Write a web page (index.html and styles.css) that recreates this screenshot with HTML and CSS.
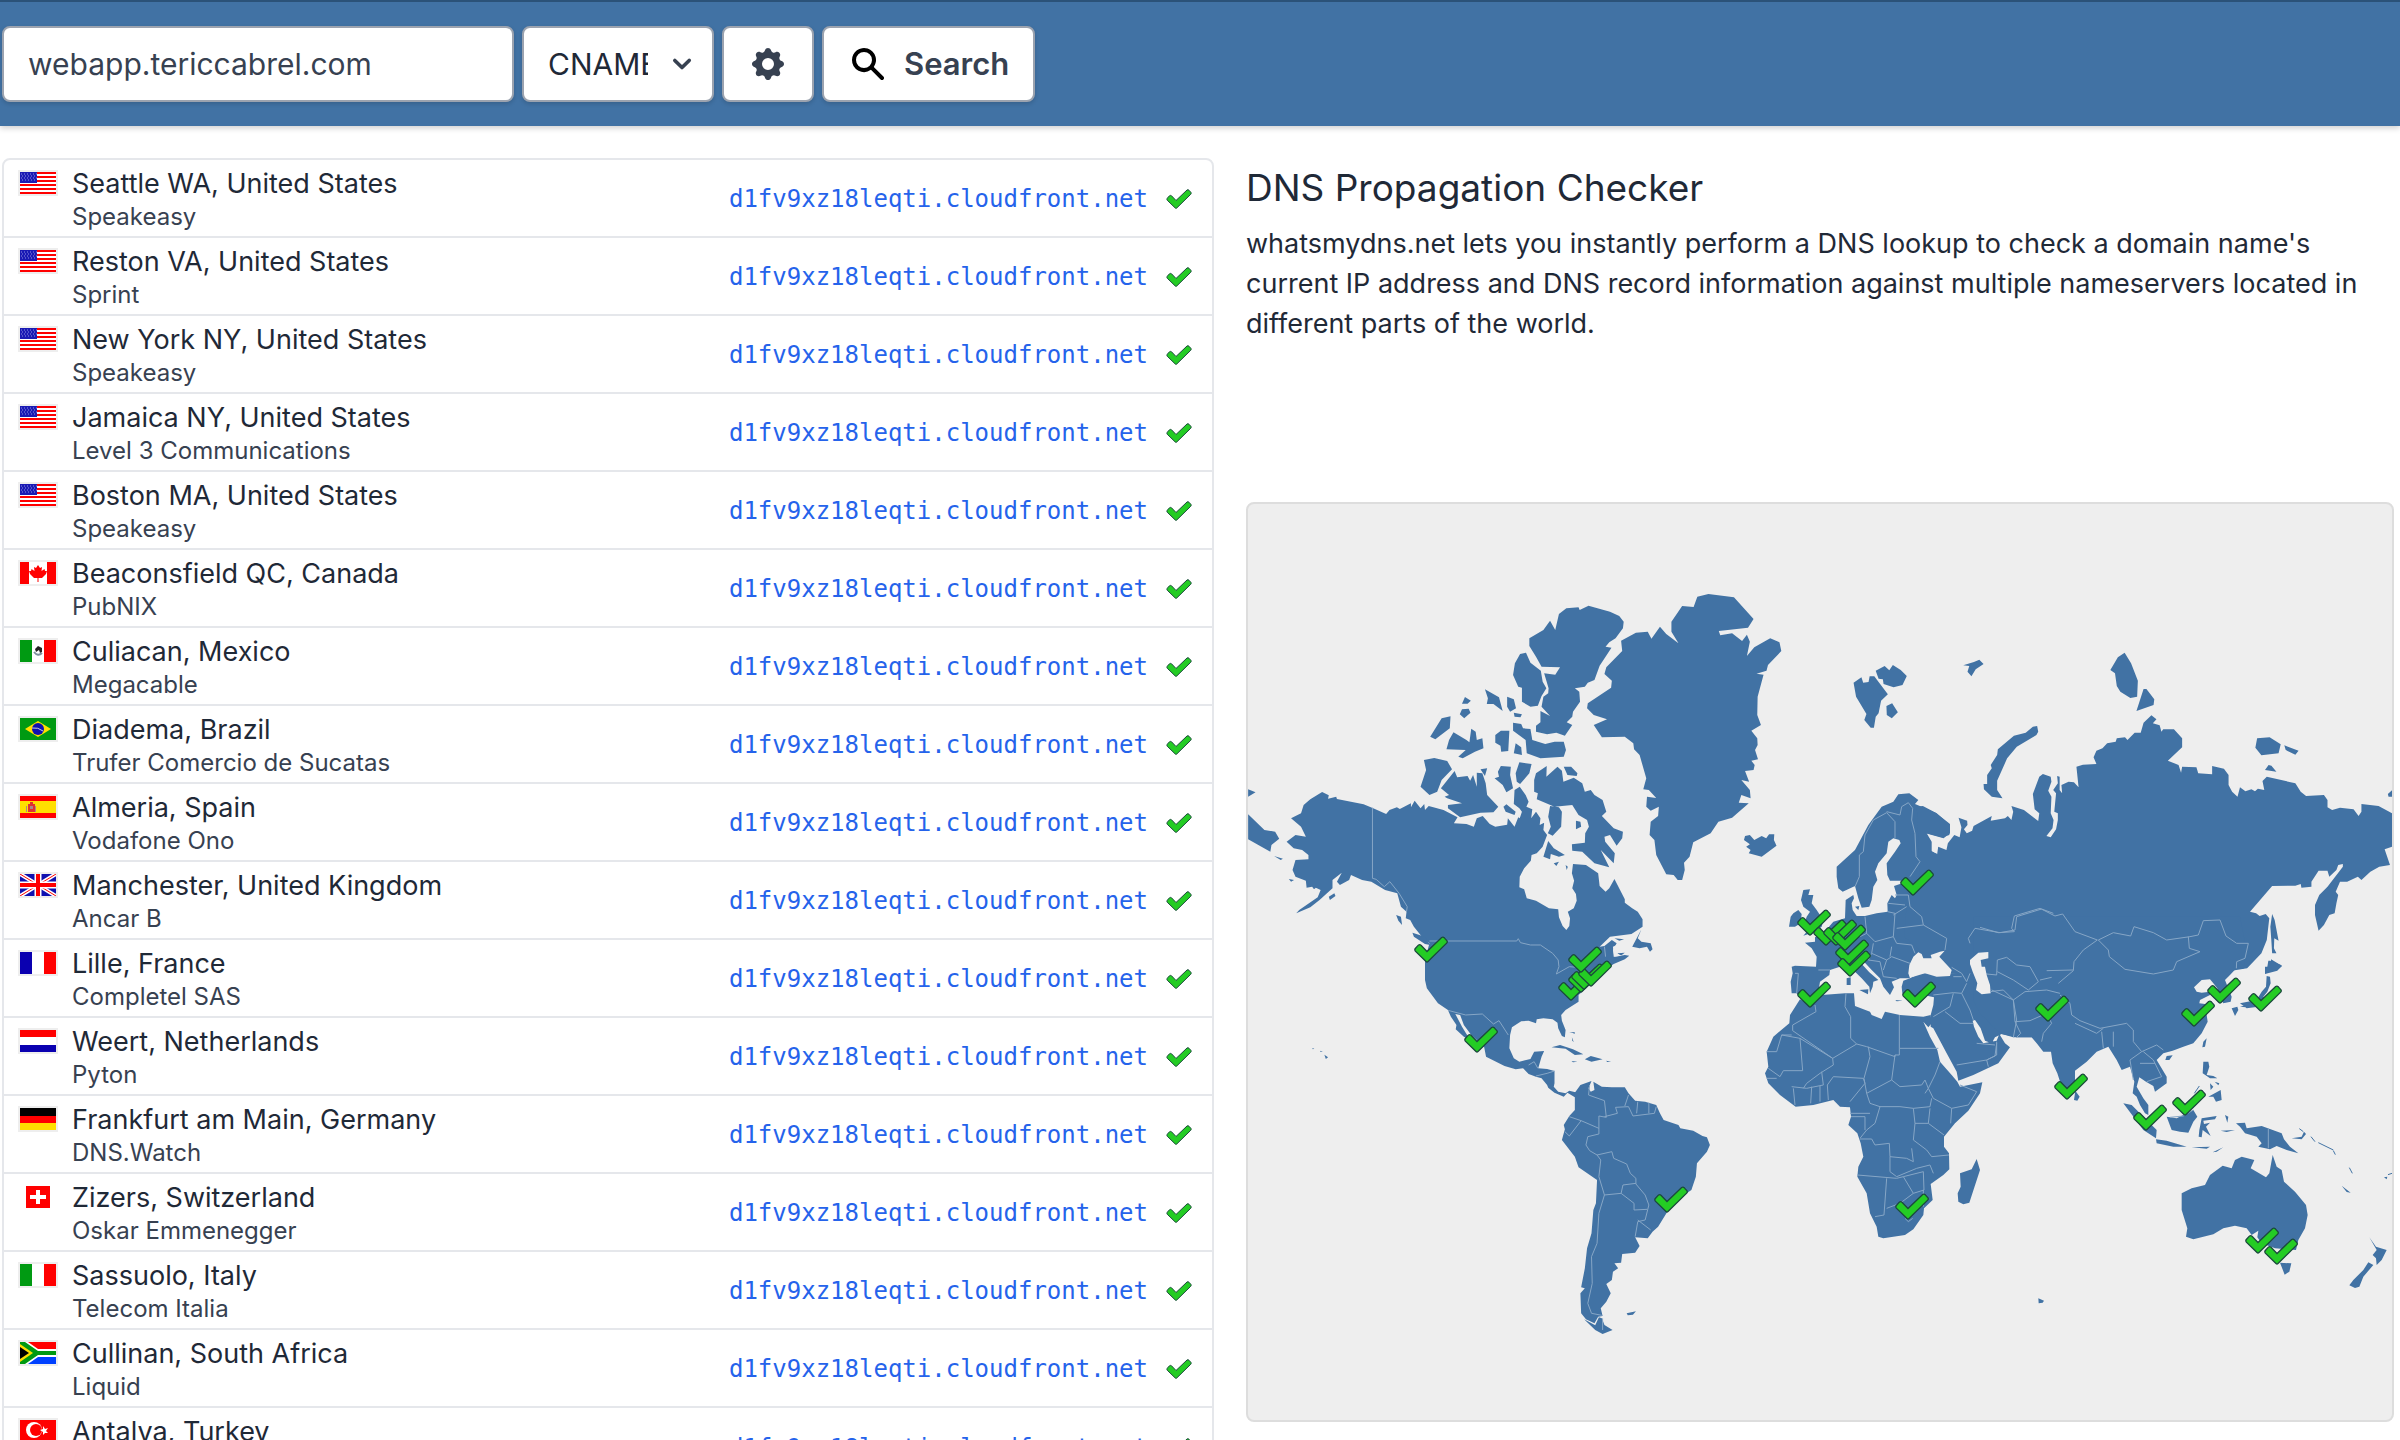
FILE: index.html
```html
<!DOCTYPE html>
<html lang="en">
<head>
<meta charset="utf-8">
<title>DNS Propagation Checker</title>
<link rel="stylesheet" href="styles.css">
</head>
<body>
<svg class="defs" aria-hidden="true">
  <symbol id="tick" viewBox="0 0 102 80"><path d="M4 45Q1 41 4 37L13 27Q17 24 21 27L39 46L83 4Q87 1 91 5L99 14Q101 17 98 21L42 76Q39 79 36 76Z" fill="#24cc24" stroke="#1b4a3c" stroke-width="4"/></symbol>
  <symbol id="us" viewBox="0 0 36 22"><path fill="#fff" d="M0 0h36v22H0z"/><path stroke="red" stroke-width="2" d="M0 1h36M0 5h36M0 9h36M0 13h36M0 17h36M0 21h36"/><path fill="#1a1ab4" d="M0 0h17v11H0z"/><path stroke="#8f8fe0" stroke-dasharray="1 2" d="M1 2h16M2 4h15M1 6h16M2 8h15"/></symbol>
  <symbol id="ca" viewBox="0 0 36 22"><path fill="#fff" d="M0 0h36v22H0z"/><path fill="red" d="M0 0h9v22H0zM27 0h9v22h-9zM18 3l2 3 2-1-.500 4 3-2 .500 2 2 0-1 3-4 4h-3.500v4h-1v-4H14l-4-4-1-3h2l.500-2 3 2-.500-4 2 1z"/></symbol>
  <symbol id="mx" viewBox="0 0 36 22"><path fill="#fff" d="M0 0h36v22H0z"/><path fill="#009a12" d="M0 0h12v22H0z"/><path fill="red" d="M24 0h12v22H24z"/><path d="M15 9l3-3 4 2 0 4-2 1-1-3-3 2z" fill="#222"/><path d="M14 12q4 5 8 1" fill="none" stroke="#7b8f9c" stroke-width="2"/></symbol>
  <symbol id="br" viewBox="0 0 36 22"><path fill="#009a12" d="M0 0h36v22H0z"/><path fill="#ffe000" d="M18 3l13 8-13 8-13-8z"/><circle cx="18" cy="11" r="6" fill="#1010b0"/><path d="M12 10q6-1 11 3" stroke="#ccd" fill="none"/></symbol>
  <symbol id="es" viewBox="0 0 36 22"><path fill="red" d="M0 0h36v22H0z"/><path fill="#ffdf00" d="M0 5h36v12H0z"/><path fill="#e03030" d="M8 8h2v-2h3v2h2v8H8z"/><path fill="#a88" d="M6 10h1v6H6zM15 10h1v6h-1zM10 10h3v3h-3z"/></symbol>
  <symbol id="gb" viewBox="0 0 36 22"><path fill="#1010b0" d="M0 0h36v22H0z"/><path stroke="#fff" stroke-width="4" d="M0 0l36 22M36 0L0 22"/><path stroke="red" stroke-width="1" d="M0 0l36 22M36 0L0 22"/><path stroke="#fff" stroke-width="7" d="M18 0v22M0 11h36"/><path stroke="red" stroke-width="4" d="M18 0v22M0 11h36"/></symbol>
  <symbol id="fr" viewBox="0 0 36 22"><path fill="#fff" d="M0 0h36v22H0z"/><path fill="#0a00b0" d="M0 0h12v22H0z"/><path fill="red" d="M24 0h12v22H24z"/></symbol>
  <symbol id="nl" viewBox="0 0 36 22"><path fill="#fff" d="M0 0h36v22H0z"/><path fill="red" d="M0 0h36v7H0z"/><path fill="#0a00b0" d="M0 15h36v7H0z"/></symbol>
  <symbol id="de" viewBox="0 0 36 22"><path d="M0 0h36v8H0z"/><path fill="red" d="M0 8h36v7H0z"/><path fill="#ffdf00" d="M0 15h36v7H0z"/></symbol>
  <symbol id="ch" viewBox="0 0 36 22"><path fill="red" d="M6 0h24v22H6z"/><path stroke="#fff" stroke-width="4" d="M18 4v14M10 11h16"/></symbol>
  <symbol id="it" viewBox="0 0 36 22"><path fill="#fff" d="M0 0h36v22H0z"/><path fill="#009a12" d="M0 0h12v22H0z"/><path fill="red" d="M24 0h12v22H24z"/></symbol>
  <symbol id="za" viewBox="0 0 36 22"><path fill="#fff" d="M0 0h36v22H0z"/><path fill="red" d="M8 0h28v7H18z"/><path fill="#0040ff" d="M8 22h28v-7H18z"/><path fill="#009a12" d="M0 0h5l13 9h18v4H18L5 22H0z"/><path fill="#ffdf00" d="M0 2l13 9-13 9z"/><path d="M0 5l9 6-9 6z"/></symbol>
  <symbol id="tr" viewBox="0 0 36 22"><path fill="red" d="M0 0h36v22H0z"/><circle cx="14" cy="10" r="8" fill="#fff"/><circle cx="16" cy="10" r="6" fill="red"/><path fill="#fff" d="M20 10l3-1 0-3 2 3 3-1-2 3 2 2-3 0-2 2 0-3z"/></symbol>
</svg>

<header class="topbar">
  <form class="search" onsubmit="return false">
    <input class="control domain" type="text" value="webapp.tericcabrel.com" aria-label="Domain name">
    <div class="record">
      <select class="control type" aria-label="Record type"><option>CNAME</option></select>
      <svg class="chevron" viewBox="0 0 20 20" aria-hidden="true"><path fill="#374151" d="M5.293 7.293a1 1 0 011.414 0L10 10.586l3.293-3.293a1 1 0 111.414 1.414l-4 4a1 1 0 01-1.414 0l-4-4a1 1 0 010-1.414z"/></svg>
    </div>
    <button class="control button" type="button" aria-label="Settings"><svg class="icon" viewBox="0 0 20 20"><path fill="#374151" fill-rule="evenodd" d="M11.490 3.170c-.38-1.560-2.600-1.560-2.980 0a1.532 1.532 0 01-2.286.948c-1.372-.836-2.942.734-2.106 2.106.54.886.061 2.042-.947 2.287-1.561.379-1.561 2.600 0 2.978a1.532 1.532 0 01.947 2.287c-.836 1.372.734 2.942 2.106 2.106a1.532 1.532 0 012.287.947c.379 1.561 2.600 1.561 2.978 0a1.533 1.533 0 012.287-.947c1.372.836 2.942-.734 2.106-2.106a1.533 1.533 0 01.947-2.287c1.561-.379 1.561-2.600 0-2.978a1.532 1.532 0 01-.947-2.287c.836-1.372-.734-2.942-2.106-2.106a1.532 1.532 0 01-2.287-.947zM10 13a3 3 0 100-6 3 3 0 000 6z"/></svg></button>
    <button class="control button" type="submit"><svg class="icon" viewBox="0 0 20 20" aria-hidden="true"><path fill-rule="evenodd" d="M8 4a4 4 0 100 8 4 4 0 000-8zM2 8a6 6 0 1110.890 3.476l4.817 4.817a1 1 0 01-1.414 1.414l-4.816-4.816A6 6 0 012 8z"/></svg>Search</button>
  </form>
</header>

<main class="content">
  <section class="results" aria-label="Results">
    <table class="servers">
      <tbody>
        <tr><td class="flag"><svg><use href="#us"/></svg></td><td class="place"><div class="city">Seattle WA, United States</div><div class="provider">Speakeasy</div></td><td class="answer"><a href="#">d1fv9xz18leqti.cloudfront.net</a></td><td class="status"><svg><use href="#tick"/></svg></td></tr>
        <tr><td class="flag"><svg><use href="#us"/></svg></td><td class="place"><div class="city">Reston VA, United States</div><div class="provider">Sprint</div></td><td class="answer"><a href="#">d1fv9xz18leqti.cloudfront.net</a></td><td class="status"><svg><use href="#tick"/></svg></td></tr>
        <tr><td class="flag"><svg><use href="#us"/></svg></td><td class="place"><div class="city">New York NY, United States</div><div class="provider">Speakeasy</div></td><td class="answer"><a href="#">d1fv9xz18leqti.cloudfront.net</a></td><td class="status"><svg><use href="#tick"/></svg></td></tr>
        <tr><td class="flag"><svg><use href="#us"/></svg></td><td class="place"><div class="city">Jamaica NY, United States</div><div class="provider">Level 3 Communications</div></td><td class="answer"><a href="#">d1fv9xz18leqti.cloudfront.net</a></td><td class="status"><svg><use href="#tick"/></svg></td></tr>
        <tr><td class="flag"><svg><use href="#us"/></svg></td><td class="place"><div class="city">Boston MA, United States</div><div class="provider">Speakeasy</div></td><td class="answer"><a href="#">d1fv9xz18leqti.cloudfront.net</a></td><td class="status"><svg><use href="#tick"/></svg></td></tr>
        <tr><td class="flag"><svg><use href="#ca"/></svg></td><td class="place"><div class="city">Beaconsfield QC, Canada</div><div class="provider">PubNIX</div></td><td class="answer"><a href="#">d1fv9xz18leqti.cloudfront.net</a></td><td class="status"><svg><use href="#tick"/></svg></td></tr>
        <tr><td class="flag"><svg><use href="#mx"/></svg></td><td class="place"><div class="city">Culiacan, Mexico</div><div class="provider">Megacable</div></td><td class="answer"><a href="#">d1fv9xz18leqti.cloudfront.net</a></td><td class="status"><svg><use href="#tick"/></svg></td></tr>
        <tr><td class="flag"><svg><use href="#br"/></svg></td><td class="place"><div class="city">Diadema, Brazil</div><div class="provider">Trufer Comercio de Sucatas</div></td><td class="answer"><a href="#">d1fv9xz18leqti.cloudfront.net</a></td><td class="status"><svg><use href="#tick"/></svg></td></tr>
        <tr><td class="flag"><svg><use href="#es"/></svg></td><td class="place"><div class="city">Almeria, Spain</div><div class="provider">Vodafone Ono</div></td><td class="answer"><a href="#">d1fv9xz18leqti.cloudfront.net</a></td><td class="status"><svg><use href="#tick"/></svg></td></tr>
        <tr><td class="flag"><svg><use href="#gb"/></svg></td><td class="place"><div class="city">Manchester, United Kingdom</div><div class="provider">Ancar B</div></td><td class="answer"><a href="#">d1fv9xz18leqti.cloudfront.net</a></td><td class="status"><svg><use href="#tick"/></svg></td></tr>
        <tr><td class="flag"><svg><use href="#fr"/></svg></td><td class="place"><div class="city">Lille, France</div><div class="provider">Completel SAS</div></td><td class="answer"><a href="#">d1fv9xz18leqti.cloudfront.net</a></td><td class="status"><svg><use href="#tick"/></svg></td></tr>
        <tr><td class="flag"><svg><use href="#nl"/></svg></td><td class="place"><div class="city">Weert, Netherlands</div><div class="provider">Pyton</div></td><td class="answer"><a href="#">d1fv9xz18leqti.cloudfront.net</a></td><td class="status"><svg><use href="#tick"/></svg></td></tr>
        <tr><td class="flag"><svg><use href="#de"/></svg></td><td class="place"><div class="city">Frankfurt am Main, Germany</div><div class="provider">DNS.Watch</div></td><td class="answer"><a href="#">d1fv9xz18leqti.cloudfront.net</a></td><td class="status"><svg><use href="#tick"/></svg></td></tr>
        <tr><td class="flag plain"><svg><use href="#ch"/></svg></td><td class="place"><div class="city">Zizers, Switzerland</div><div class="provider">Oskar Emmenegger</div></td><td class="answer"><a href="#">d1fv9xz18leqti.cloudfront.net</a></td><td class="status"><svg><use href="#tick"/></svg></td></tr>
        <tr><td class="flag"><svg><use href="#it"/></svg></td><td class="place"><div class="city">Sassuolo, Italy</div><div class="provider">Telecom Italia</div></td><td class="answer"><a href="#">d1fv9xz18leqti.cloudfront.net</a></td><td class="status"><svg><use href="#tick"/></svg></td></tr>
        <tr><td class="flag"><svg><use href="#za"/></svg></td><td class="place"><div class="city">Cullinan, South Africa</div><div class="provider">Liquid</div></td><td class="answer"><a href="#">d1fv9xz18leqti.cloudfront.net</a></td><td class="status"><svg><use href="#tick"/></svg></td></tr>
        <tr><td class="flag"><svg><use href="#tr"/></svg></td><td class="place"><div class="city">Antalya, Turkey</div></td><td class="answer"><a href="#">d1fv9xz18leqti.cloudfront.net</a></td><td class="status"><svg><use href="#tick"/></svg></td></tr>
      </tbody>
    </table>
  </section>

  <section class="about">
    <div class="intro">
      <h1>DNS Propagation Checker</h1>
      <p>whatsmydns.net lets you instantly perform a DNS lookup to check a domain name's current IP address and DNS record information against multiple nameservers located in different parts of the world.</p>
    </div>
    <div class="map">
      <svg class="world" viewBox="1248 504 1144 916" role="img" aria-label="World map of DNS servers">
        <!-- North America -->
        <g transform="translate(1240 560) scale(.37 .33333)">
          <path class="land" d="M222 696L240 706 238 716 260 710 262 717 334 733 360 745 395 762 404 750 424 742 432 747 462 730 462 742 472 722 488 745 498 732 500 750 510 738 550 750 588 772 578 790 612 792 632 800 640 775 656 768 675 792 690 800 722 794 724 775 742 800 752 772 756 775 762 755 755 745 740 732 742 690 756 680 772 705 780 725 774 740 790 748 787 775 800 755 812 775 810 795 822 788 820 810 830 825 818 860 802 880 788 885 786 902 768 925 756 950 755 982 768 988 775 1015 800 1022 835 1045 860 1048 862 1072 872 1098 882 1110 890 1098 892 1075 886 1055 902 1045 910 1022 908 1002 898 985 903 962 897 940 900 912 935 915 968 940 972 978 988 995 998 985 1012 957 1040 1018 1040 1028 1060 1045 1075 1055 1088 1078 1088 1100 1058 1122 1000 1130 972 1160 985 1158 1005 1140 1018 1150 1008 1170 1012 1190 1040 1185 1052 1187 1040 1198 1010 1212 985 1230 950 1270 930 1290 915 1305 915 1325 880 1350 868 1365 870 1382 880 1410 878 1432 870 1428 860 1405 858 1388 845 1378 820 1375 802 1378 800 1390 780 1382 760 1384 735 1402 730 1425 728 1465 740 1495 755 1505 785 1497 795 1475 822 1473 815 1490 806 1525 830 1527 850 1533 850 1570 848 1580 860 1595 880 1600 890 1592 912 1598 905 1612 885 1598 875 1610 850 1598 833 1583 830 1575 815 1555 800 1550 780 1542 765 1525 745 1528 715 1518 665 1490 660 1462 640 1440 625 1425 605 1395 595 1365 582 1362 600 1400 622 1440 605 1430 583 1408 585 1395 570 1370 562 1350 535 1330 505 1285 500 1260 500 1200 512 1150 490 1128 470 1100 460 1080 448 1075 450 1055 435 1040 425 1000 392 990 355 965 330 960 300 945 295 960 270 975 262 965 275 938 250 960 250 985 215 1020 190 1042 152 1060 160 1050 210 1012 218 990 205 983 200 988 195 980 180 983 178 962 150 950 142 930 150 900 185 898 185 885 168 870 145 865 126 845 150 825 178 830 165 800 138 775 165 760 172 735 190 718Z"/>
          <!-- Greenland and Iceland -->
          <path class="land" d="M1236 110L1266 102 1335 112 1388 177 1373 203 1294 213 1298 226 1330 220 1357 243 1370 224 1378 245 1370 288 1390 262 1433 235 1458 247 1463 273 1427 315 1423 332 1396 341 1415 344 1399 410 1398 465 1408 495 1382 512 1398 535 1399 555 1392 570 1400 598 1382 602 1391 615 1388 630 1365 633 1376 665 1355 660 1378 690 1380 715 1355 705 1348 728 1375 730 1330 773 1293 785 1272 820 1225 847 1215 890 1200 908 1202 930 1195 960 1183 960 1172 945 1152 943 1125 885 1120 840 1107 825 1110 785 1130 768 1132 740 1110 752 1098 740 1100 710 1125 714 1105 690 1090 688 1098 655 1080 585 1065 568 1063 550 1040 530 978 532 956 495 992 478 956 465 938 445 940 430 1003 383 1005 362 985 342 990 322 1033 273 1030 242 1070 218 1102 215 1112 236 1135 200 1152 222 1185 250 1166 215 1166 185 1195 138 1226 141ZM1365 828L1378 825 1390 840 1410 828 1422 835 1430 823 1444 823 1443 840 1450 857 1410 890 1375 880 1380 870 1368 860 1378 853 1362 840Z"/>
          <!-- Arctic islands -->
          <path class="land" d="M915 142L918 150 942 137 1000 155 1025 168 1037 185 1035 205 1015 235 998 247 988 260 1004 263 972 317 958 360 940 368 932 380 905 385 917 395 919 425 900 455 898 470 883 487 898 495 878 527 855 518 830 523 800 515 800 497 812 487 812 453 838 468 815 440 820 410 833 400 834 385 822 340 852 344 865 322 815 320 800 290 782 258 782 235 820 210 838 182 852 210 862 162 882 145ZM757 282L773 278 785 308 813 332 818 365 828 385 815 408 805 437 785 440 762 425 762 383 752 380 738 345 743 310ZM662 388L700 412 710 453 685 432 667 432 670 415ZM722 410L740 418 746 445 730 455 722 440ZM608 411L624 422 615 431 600 431ZM600 448L618 446 623 458 606 475 594 463ZM545 475L569 469 567 505 528 538 514 530ZM577 517L612 540 620 547 625 506 637 515 640 540 655 535 658 565 635 575 602 595 590 590 610 570 558 568 565 540ZM690 525L705 512 728 512 725 573 706 575 704 557 690 548ZM740 458L762 463 758 472 742 470ZM738 488L760 492 765 505 785 507 790 540 825 552 850 545 875 545 881 570 875 590 812 595 775 580 772 540 738 512ZM745 550L760 562 762 585 740 580ZM497 600L525 594 560 603 573 628 545 660 533 695 512 705 488 680 503 630ZM580 633L587 652 615 648 622 662 630 645 640 680 640 638 655 640 664 670 668 705 698 740 685 757 650 758 595 772 562 745 562 735 600 730 560 715 553 710 565 705 543 685ZM650 628L668 625 662 648ZM705 618L732 620 730 645 738 685 720 697 710 675 688 655 700 650 697 635ZM755 607L788 612 782 640 757 672 748 665 745 640ZM712 740L720 733 745 755 742 765 718 755ZM800 640L829 618 828 650 858 620 870 632 874 665 902 653 925 670 932 695 948 690 958 705 980 720 990 755 978 768 1010 805 1035 815 1033 835 1018 857 1000 825 985 830 987 845 1013 880 1010 910 975 870 998 922 958 910 925 875 898 872 897 853 932 848 933 820 943 800 938 780 915 765 898 735 850 740 802 718 805 700 795 695 795 660ZM875 620L895 620 912 640 910 648 885 645ZM838 738L862 742 870 755 868 800 845 827 832 820 840 800 833 770ZM908 782L920 785 922 800 908 808ZM833 843L848 865 878 885 862 890 840 882 838 898 820 890ZM848 910L862 905 855 918ZM880 915L886 920 883 930Z"/>
          <path class="land" d="M22 688L42 697 22 710ZM22 763L66 810 95 815 106 836 85 855 82 875 22 838ZM92 888L116 896 110 900ZM132 957L146 960 138 965ZM240 1010L255 1000 258 1008 243 1020ZM422 1065L435 1070 438 1095 428 1082ZM466 1118L500 1130 514 1155 500 1152 470 1130ZM1085 1108L1075 1135 1085 1145 1110 1150 1115 1168 1108 1175 1100 1160 1080 1165 1060 1160ZM1012 1135L1038 1138 1025 1142ZM1020 1180L1040 1178 1028 1188ZM195 1464L201 1466 197 1468ZM216 1472L224 1476 218 1476ZM228 1484L238 1492 232 1497ZM842 1462L865 1455 900 1468 928 1483 905 1485 880 1466ZM932 1498L948 1488 980 1498 950 1505ZM896 1503L912 1505 900 1507ZM990 1502L1003 1505 992 1506ZM890 1416L905 1417 904 1422 900 1419ZM897 1432L902 1446 898 1442Z"/>
          <path class="water" d="M1008 1160L1018 1155 1018 1180 1032 1187 1010 1190Z"/>
          <path class="border" d="M358 743V955L368 958 390 980 405 965 430 1000 452 1040 450 1055M512 1143H748L752 1136 758 1148 785 1155 812 1155 845 1180 860 1200 862 1220 855 1242 890 1220 912 1222M985 1160L988 1190M562 1351L610 1365 655 1362 685 1392 700 1382 725 1425M780 1515L795 1505 805 1525M800 1548L830 1540 850 1533"/>
        </g>
        <!-- South America -->
        <g transform="translate(1240 880) scale(.37 .33333)">
          <path class="land" d="M905 650L905 638 920 615 950 603 942 625 948 635 958 630 955 605 978 620 1005 622 1040 622 1050 640 1068 662 1095 665 1125 675 1135 700 1145 720 1185 735 1190 745 1225 752 1250 768 1262 772 1270 795 1262 815 1235 850 1232 890 1220 930 1200 945 1155 995 1130 1040 1115 1055 1102 1075 1068 1072 1080 1098 1068 1118 1033 1122 1030 1148 1012 1150 1022 1165 1008 1175 1005 1200 990 1212 1002 1240 990 1265 975 1285 980 1308 968 1310 958 1330 935 1318 922 1300 920 1240 932 1225 922 1222 932 1165 938 1105 950 1060 955 990 962 970 965 900 915 862 905 830 870 780 878 748 875 735 890 708 905 690ZM930 1318L960 1336 970 1312 978 1315 985 1335 1007 1350 980 1362 960 1350ZM1045 1300L1070 1294 1062 1304 1048 1306Z"/>
          <path class="border" d="M945 615L942 645 985 662 990 712 970 708 970 762 940 770 935 795 945 812 965 825 1005 815 1010 835 1045 852 1055 880 1070 895 1070 912 1095 945 1105 975 1095 1020 1075 1025 1068 1070M985 710L1020 700 1015 682 1050 680 1062 708 1120 700 1125 680M1050 645L1040 678M1075 665L1072 700M1105 668V700M890 710L922 722 970 745M922 722L890 768 878 755M965 825L975 840 970 890 985 945 1030 940 1035 915 1070 910M1030 940L1065 970 1065 990 1100 988M985 945L970 1000 965 1090 950 1130 952 1210 940 1270 950 1300 978 1306M980 1315V1350M1075 1020L1110 1050"/>
        </g>
        <!-- Europe, Africa and the Middle East -->
        <g transform="translate(1740 760) scale(.33333)">
          <path class="land" d="M180 718L200 728 245 705 315 700 342 700 345 738 390 755 395 765 425 777 435 755 480 765 550 770 572 765 575 790 565 802 550 785 570 830 592 870 600 905 635 945 652 965 660 980 727 967 720 1000 685 1052 645 1090 612 1130 612 1160 627 1180 628 1228 610 1245 572 1272 578 1320 552 1345 550 1365 520 1408 495 1425 430 1435 415 1430 410 1400 390 1360 380 1300 352 1250 355 1220 370 1190 362 1150 352 1120 325 1095 333 1070 330 1042 300 1040 280 1020 220 1035 167 1040 120 1005 85 970 75 940 85 920 80 875 100 830 148 790 150 765ZM710 1197L720 1230 688 1328 670 1333 655 1325 653 1300 662 1280 660 1240 695 1228Z"/>
          <path class="land" d="M155 620L165 617 228 620 230 590 215 565 195 548 225 545 225 532 250 520 280 485 315 475 317 420 340 405 342 415 335 430 338 450 350 468 375 468 410 460 443 455 442 430 455 405 465 415 470 405 462 378 480 372 540 345 960 300V600L760 640 505 640 510 655 480 655 455 665 462 682 450 705 430 680 420 655 395 630 372 605 368 615 388 637 415 660 400 665 398 680 390 700 388 680 365 655 345 635 330 625 300 620 270 630 268 645 240 665 235 695 205 715 180 712 170 700 155 700 152 665 158 640ZM290 320L345 270 385 195 425 140 460 125 475 103 508 100 535 120 525 132 545 140 590 160 630 195 628 225 605 232 560 220 575 245 575 275 592 282 600 340 540 360 480 362 450 362 442 345 440 310 465 275 482 250 478 240 460 235 445 245 440 280 415 310 405 335 412 360 400 380 395 420 388 440 365 443 355 415 345 378 308 395 295 385 290 350ZM190 390L210 388 205 405 220 405 215 430 230 450 250 480 245 500 225 515 190 527 205 510 190 500 200 470 210 455 190 440 183 420ZM160 460L175 450 185 462 182 490 165 500 147 500 152 470ZM345 440L358 438 355 450ZM320 655L332 652 332 675 320 675ZM358 690L385 688 384 703ZM466 720L488 722 470 724ZM322 630L330 632 328 648Z"/>
          <path class="land" d="M490 662L510 655 540 640 960 640V850L875 832 820 832 785 822 765 832 755 850 735 842 722 805 705 780 698 782 702 800 715 830 730 850 770 842 778 822 795 850 810 862 775 910 700 945 655 962 650 935 620 880 580 805 572 800 572 765 580 735 582 712 550 705 520 715 487 700 485 680Z"/>
        </g>
        <!-- Russia and its Arctic islands -->
        <g transform="translate(1840 620) scale(.35714 .33333)">
          <path class="land" d="M215 560L232 558 268 578 308 612 308 640 290 655 240 640 255 665 255 692 272 703 275 680 298 690 302 670 320 645 335 652 340 622 332 593 356 602 357 615 347 628 355 640 370 632 374 618 425 588 422 602 462 595 470 588 480 600 485 575 480 558 515 570 555 603 558 580 545 568 540 522 558 470 568 462 590 470 592 485 583 512 592 530 590 580 598 600 595 625 578 648 590 652 605 628 610 600 610 580 600 575 605 520 597 510 610 490 608 468 615 470 615 510 622 520 620 495 640 485 655 487 668 502 662 440 680 434 718 432 710 412 718 392 735 385 748 370 772 365 775 355 798 352 805 360 825 338 842 338 850 308 872 286 886 298 876 310 895 316 900 335 905 328 935 328 958 355 958 382 918 422 948 435 955 458 958 440 998 442 1003 460 1042 463 1042 438 1075 446 1088 465 1088 495 1098 515 1113 530 1120 502 1135 514 1152 508 1162 514 1170 506 1188 510 1183 483 1195 470 1275 490 1290 515 1305 528 1355 525 1365 540 1365 562 1378 570 1400 563 1438 568 1452 588 1460 575 1460 552 1508 558 1546 580V680L1525 688 1540 735 1510 740 1485 755 1460 780 1450 770 1420 785 1400 785 1388 815 1395 825 1390 850 1385 880 1370 885 1355 915 1340 932 1330 885 1330 855 1342 825 1365 800 1408 740V732L1395 735 1390 750 1370 770 1365 752 1340 752 1320 785V800L1292 803 1290 792 1275 797 1210 798 1148 875 1165 880 1175 888 1192 882 1202 895 1195 960 1180 1000 1140 1045 1110 1050 800 1100 300 1060 180 950 190 800 224 765Z"/>
          <path class="land" d="M38 188L60 172 65 188 80 186 83 169 96 169 134 223 115 242 108 280 100 290 95 323 86 323 68 300 74 282 45 230ZM100 152L125 138 138 151 148 135 170 150 187 168 175 195 150 202 122 192 120 178 108 176ZM130 258L146 250 162 277 145 295 131 285ZM345 136L375 126 390 119 402 132 380 148 368 169 357 155 362 138ZM797 98L815 130 834 182 832 230 813 234 785 215 775 198 770 160 757 150 778 112ZM850 207L858 207 880 238 878 255 830 273ZM540 320L552 318 555 335 550 345 495 380 468 415 440 482 440 510 455 535 425 530 403 508 402 492 412 492 412 465 425 445 422 435 440 405 442 388 487 347 520 338ZM1168 355L1203 352 1234 373 1228 400 1180 406 1163 383ZM1244 376L1284 392 1275 404 1248 390ZM1190 450L1200 435 1208 437 1222 455ZM1534 522L1546 510V530H1536ZM1210 882L1217 900 1228 962 1216 955 1215 985 1222 1000 1210 1000 1208 965 1205 920ZM1207 1018L1238 1038 1228 1048 1200 1055 1190 1062 1190 1040 1204 1040Z"/>
        </g>
        <!-- Asia and Oceania -->
        <g transform="translate(1980 900) scale(.33333)">
          <path class="land" d="M780 50L800 150 790 207 769 205 750 225 735 240 755 290 752 305 730 310 715 285 712 265 700 250 690 238 665 240 642 262 650 275 665 278 690 275 690 285 660 300 658 310 675 312 683 365 665 400 640 430 610 440 578 452 550 460 530 480 560 530 560 550 525 575 520 558 498 545 478 532 470 560 490 595 505 615 505 645 495 640 480 615 470 590 458 580 463 545 450 500 425 510 410 480 385 440 350 455 320 485 285 512 285 560 262 590 245 560 232 520 218 490 213 455 190 455 170 430 155 412 110 412 65 402 40 380 0 340-20 300-20 50ZM286 572L299 590 292 602 282 600ZM680 415L675 440 667 442 670 425ZM560 468L578 466 568 480 556 480ZM430 610L455 615 500 660 530 690 528 715 490 690ZM528 718L560 722 620 740 580 740 530 730ZM560 650L590 655 640 630 652 650 640 665 625 698 600 695 575 690ZM665 655L710 648 705 658 670 662 672 672 690 668 678 680 692 708 675 695 668 690 665 712 656 710 658 690ZM670 485L685 485 688 500 680 525 700 528 712 535 690 535 668 520ZM685 590L722 570 725 600 708 605 700 590ZM690 550L700 560 692 570ZM704 545L718 550 715 556ZM735 645L745 650 742 668ZM722 692L765 690 740 696ZM635 742L690 740 680 746ZM698 757L730 742 710 755ZM768 670L795 668 800 685 845 678 905 700 912 718 930 740 955 760 920 750 890 738 870 748 835 740 845 730 830 710 795 700 780 680ZM935 715L965 710 972 695 978 702 965 718ZM860 228L870 230 872 250 862 275 850 290 860 300 835 320 800 325 780 310 830 300 845 275 858 260ZM755 325L772 320 775 330 765 348ZM780 320L800 315 798 322ZM865 182L870 182 905 196 892 212 855 222 862 200Z"/>
          <path class="land" d="M605 880L635 865 675 855 690 825 728 797 755 805 765 780 785 770 823 780 812 805 858 832 868 820 878 765 890 800 905 810 912 845 945 875 978 915 983 945 975 985 955 1020 948 1050 920 1048 885 1045 845 1030 832 1012 835 992 815 1005 800 985 765 977 730 985 700 1003 640 1018 618 1010 622 985 605 930ZM900 1088L934 1090 928 1115 914 1124ZM1168 1012L1188 1040 1220 1050 1205 1080 1190 1095 1188 1075 1178 1065 1190 1050ZM1165 1087L1180 1095 1150 1130 1138 1160 1125 1164 1108 1156 1120 1140 1150 1110ZM1085 857L1112 878 1100 876ZM1212 832L1222 830 1220 838ZM175 1195L192 1202 188 1208 176 1210Z"/>
          <path class="reef" d="M643 580L658 558M958 686L970 695M993 710L1005 725M1015 728L1060 750M1060 752L1066 764M1108 803L1117 820M1224 824L1236 820"/>
          <path class="border" d="M0 82L55 98 103 95 95 85 103 48 180 25 225 48 248 42 285 95 352 120 310 150 282 185 280 212 235 250M355 120L400 98 452 108 462 80 520 98 560 120 630 110 655 105 670 62 720 60 738 108 770 130 805 130 795 175 770 185 769 205M355 120L385 150 388 170 435 208 520 222 580 210 590 185 660 155 628 145 625 110M0 220L50 225 52 180 80 172 110 195 150 200 175 245 145 270 100 240 52 215M35 270L100 300 135 275 200 270 240 280M200 212L280 210M180 240L215 232M100 300L105 365 150 362 200 340M105 365L122 400 110 412M240 285L270 310 275 345 300 362 360 385 440 370 460 390 460 425 485 455 530 435 550 450M285 370L350 400 370 385M365 395L370 445M400 395V440M485 455L450 480 460 540M490 455L520 480 545 530 500 545M480 490L525 490M200 340L215 370 190 400 185 425M570 652L610 648 640 630M865 685V745M-10 430L45 435M20 480L45 468 50 430"/>
        </g>
        <!-- Inland seas and borders -->
        <g transform="translate(1740 760) scale(.33333)">
          <path class="water" d="M520 590L535 577 545 582 550 595 575 595 572 585 600 575 614 572 598 590 635 630 630 648 590 650 555 640 520 650 505 640 508 615ZM690 600L715 578 745 576 745 595 722 600 725 620 735 620 740 645 750 675 752 700 725 703 708 690 712 670 698 635 690 612Z"/>
          <path class="border" d="M345 380L358 350 358 285 370 275 375 225 400 180 440 158 465 185V235M440 155L480 165 485 140 505 128 518 145 515 180 525 220 528 290 540 305 510 350M375 470L380 520 405 545 460 530 465 460 443 455M465 405L505 405 510 440 545 470 550 495 470 505M445 430L495 435M460 465L500 440M550 495L620 535 615 570M460 530L470 550 515 555 525 580M400 550L395 580 440 600 455 590 510 610M380 520L360 530M395 580L385 600 420 605 430 650 470 655M440 600L430 630M455 560L450 590M690 550L685 535 705 505 780 518 825 510 830 470 905 447 940 460M635 622L665 640 680 665 690 640M580 705L640 698 665 700 680 670M665 700L690 750 700 780M640 700L630 740 580 770M615 755L660 790 700 790M770 845L770 885 740 900 650 915M740 900L745 920M640 650L665 650M820 832L830 780 820 720 790 690 750 695"/>
          <path class="border" d="M165 640H175L170 700M235 630L270 630M225 735L228 755 158 795V812L278 895 350 852 332 835V770L315 740 318 700M350 852L380 860 465 890V885H478V765M480 865H595M80 875H110L125 825H155M125 825L180 835 188 932H130L120 950M180 835L278 895 280 915 240 940 200 970 190 985M120 950L85 925M80 955H110M155 980L200 985 250 975 245 935M165 1035L160 985M212 1030L215 980M240 1025V978M265 1020L262 975 280 950 370 955 375 970 330 1025M385 860L390 890 372 955 380 1000 455 960 465 885M455 960L480 980 545 975 555 960 565 985 555 1000M600 905L585 945 565 985 580 1015 635 1045 685 1035 710 995 660 975M635 1045L632 1090M380 1000L390 1030 420 1040 480 1040 520 1045 570 1040 575 1015M420 1040L405 1090 380 1110 360 1135M330 1060H390M333 1070H375V1110M520 1045L525 1090 565 1090 612 1125M565 1090L570 1045M525 1090L520 1140 560 1170 575 1190 627 1185M360 1137H395L405 1155 448 1150 450 1190 500 1195 520 1205 515 1165M450 1190V1235L470 1250 530 1225 570 1215 580 1240M352 1245L470 1255 490 1250 550 1235 552 1290 520 1300 490 1250M440 1255L432 1365 405 1370M520 1300L480 1330 440 1345M550 1290L550 1340M495 1375L505 1385 518 1375"/>
        </g>
        <!-- Server pins -->
        <use href="#tick" width="34" height="27" x="1414" y="936"/>
        <use href="#tick" width="34" height="27" x="1558" y="974"/>
        <use href="#tick" width="34" height="27" x="1568" y="966"/>
        <use href="#tick" width="34" height="27" x="1571" y="963"/>
        <use href="#tick" width="34" height="27" x="1578" y="960"/>
        <use href="#tick" width="34" height="27" x="1568" y="946"/>
        <use href="#tick" width="34" height="27" x="1464" y="1026"/>
        <use href="#tick" width="34" height="27" x="1654" y="1186"/>
        <use href="#tick" width="34" height="27" x="1900" y="869"/>
        <use href="#tick" width="34" height="27" x="1797" y="909"/>
        <use href="#tick" width="34" height="27" x="1813" y="919"/>
        <use href="#tick" width="34" height="27" x="1823" y="919"/>
        <use href="#tick" width="34" height="27" x="1832" y="924"/>
        <use href="#tick" width="34" height="27" x="1835" y="939"/>
        <use href="#tick" width="34" height="27" x="1837" y="950"/>
        <use href="#tick" width="34" height="27" x="1797" y="981"/>
        <use href="#tick" width="34" height="27" x="1902" y="981"/>
        <use href="#tick" width="34" height="27" x="1895" y="1193"/>
        <use href="#tick" width="34" height="27" x="2035" y="995"/>
        <use href="#tick" width="34" height="27" x="2054" y="1073"/>
        <use href="#tick" width="34" height="27" x="2133" y="1104"/>
        <use href="#tick" width="34" height="27" x="2172" y="1089"/>
        <use href="#tick" width="34" height="27" x="2181" y="1000"/>
        <use href="#tick" width="34" height="27" x="2207" y="977"/>
        <use href="#tick" width="34" height="27" x="2248" y="985"/>
        <use href="#tick" width="34" height="27" x="2245" y="1227"/>
        <use href="#tick" width="34" height="27" x="2264" y="1238"/>
      </svg>
    </div>
  </section>
</main>
</body>
</html>
```
FILE: styles.css
```css
* { box-sizing: border-box; }
body {
  margin: 0;
  height: 100vh;
  overflow: hidden;
  background: #fff;
  color: #1f2937;
  font-family: Inter, "Liberation Sans", sans-serif;
}
.defs { position: absolute; width: 0; height: 0; }

.topbar {
  padding: 24px 2px;
  border-top: 2px solid #2b5278;
  background: #4172a4;
  box-shadow: 0 2px 6px rgba(0, 0, 0, .2);
}
.search { display: flex; gap: 8px; }
.control {
  height: 76px;
  padding: 0 24px;
  border: 2px solid #9ca3af;
  border-radius: 8px;
  background: #fff;
  box-shadow: 0 2px 4px rgba(0, 0, 0, .15);
  color: #374151;
  font: 400 30px/40px Inter, "Liberation Sans", sans-serif;
}
.domain { width: 512px; }
.record { position: relative; }
.type {
  width: 192px;
  padding: 0 64px 0 24px;
  color: #1f2937;
  appearance: none;
}
.chevron {
  position: absolute;
  top: 20px;
  right: 14px;
  width: 36px;
  height: 36px;
  pointer-events: none;
}
.button {
  display: flex;
  align-items: center;
  gap: 16px;
  font-size: 31px;
  font-weight: 600;
}
.icon { width: 40px; height: 40px; }

.content {
  display: grid;
  grid-template-columns: 1212fr 1148fr;
  gap: 32px;
  align-items: start;
  padding: 32px 6px 32px 2px;
}
.results { border: 2px solid #e5e7eb; border-radius: 8px; }
.servers { width: 100%; border-spacing: 0; }
.servers td {
  height: 78px;
  padding: 0;
  border-bottom: 2px solid #e5e7eb;
  vertical-align: top;
}
.servers tr:last-child td { border-bottom: 0; }
.servers .flag { width: 68px; padding: 10px 0 0 14px; }
.flag svg {
  display: block;
  width: 40px;
  height: 26px;
  border: 2px solid #eee;
}
.plain svg { border-color: transparent; }
.servers .place { padding-top: 6px; }
.city { font-size: 27px; line-height: 36px; }
.provider { color: #374151; font-size: 24px; line-height: 30px; }
.servers .answer {
  padding-top: 2px;
  vertical-align: middle;
  text-align: right;
  font: 24px/32px "DejaVu Sans Mono", monospace;
}
.answer a { color: #2563eb; text-decoration: none; }
.servers .status { width: 64px; padding: 2px 0 0 18px; vertical-align: middle; }
.status svg { display: block; width: 26px; height: 20px; }

.intro { min-height: 344px; }
h1 { margin: 0; padding-top: 6px; font-size: 37px; font-weight: 400; line-height: 48px; }
p { margin: 12px 0 0; font-size: 27px; line-height: 40px; }
.map { border: 2px solid #ddd; border-radius: 8px; background: #eee; overflow: hidden; }
.world { display: block; width: 100%; }
.land { fill: #4172a4; }
.water { fill: #eee; }
.reef { fill: none; stroke: #4172a4; stroke-width: 3; }
.border { fill: none; stroke: #86a6c6; stroke-width: 1; vector-effect: non-scaling-stroke; }
```
